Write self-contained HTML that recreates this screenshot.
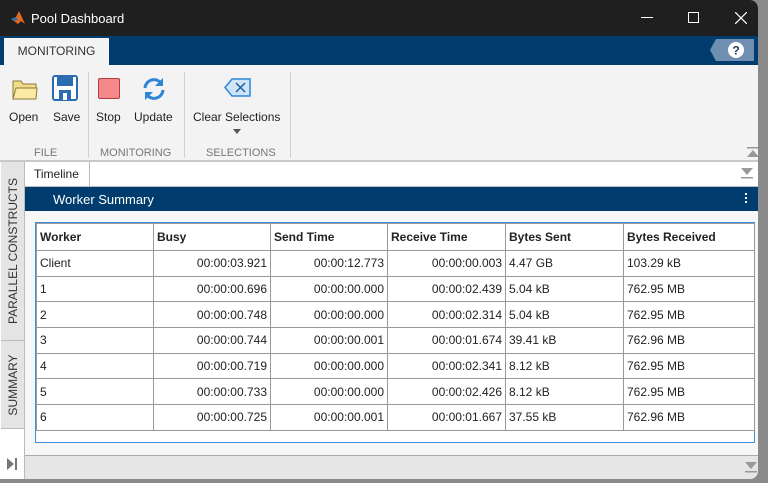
<!DOCTYPE html>
<html><head><style>
*{margin:0;padding:0;box-sizing:border-box}
body{width:768px;height:483px;background:#8a8a8a;font-family:"Liberation Sans",sans-serif;position:relative;overflow:hidden}
.win{position:absolute;left:0;top:0;width:758px;height:479px;background:#f3f3f3;border-radius:0 8px 8px 0;overflow:hidden}
.title{position:absolute;left:0;top:0;width:758px;height:36px;background:#1f1f1f;color:#fff;font-size:13px}
.tabs{position:absolute;left:0;top:36px;width:758px;height:29px;background:#003c6e}
.tab{position:absolute;left:4px;top:2px;width:105px;height:27px;background:#f3f3f3;color:#333;font-size:12px;text-align:center;line-height:27px}
.rb{position:absolute;font-size:12px;color:#222;text-align:center}
.grp{position:absolute;top:147px;font-size:11px;color:#777}
.sep{position:absolute;top:72px;width:1px;height:86px;background:#d0d0d0}
.side{position:absolute;left:0;top:162px;width:25px;height:317px;background:#fff;border-right:1px solid #bbb}
.vt{position:absolute;left:1px;width:23px;background:#e4e4e4;border-bottom:1px solid #bbb}
.vt span{position:absolute;left:50%;top:50%;transform:translate(-50%,-50%) rotate(-90deg);white-space:nowrap;font-size:12px;color:#333}
table{position:absolute;left:36px;top:223px;border-collapse:collapse;font-size:12px;color:#222}
td{border:1px solid #999;height:25.7px;padding:0 3px;white-space:nowrap}
th{border:1px solid #999;height:27px;padding:0 3px;text-align:left;font-weight:bold}
td.r{text-align:right}
</style></head><body>
<div class="win">
<div class="title">
<svg style="position:absolute;left:10px;top:10px" width="16" height="16" viewBox="0 0 16 16"><path d="M1 9l5-2 3-6 6 13-4-3-3 3z" fill="#e26b1f"/><path d="M1 9l5-2 2 3-4 1z" fill="#3a6ea8"/></svg>
<span style="position:absolute;left:31px;top:11px">Pool Dashboard</span>
<div style="position:absolute;left:641px;top:17px;width:12px;height:1px;background:#fff"></div>
<div style="position:absolute;left:688px;top:12px;width:11px;height:11px;border:1px solid #fff"></div>
<svg style="position:absolute;left:735px;top:12px" width="12" height="12"><path d="M0 0L12 12M12 0L0 12" stroke="#fff" stroke-width="1.2"/></svg>
</div>
<div class="tabs"><div class="tab">MONITORING</div>
<svg style="position:absolute;left:710px;top:3px" width="46" height="22"><path d="M6 0H44V22H6L0 11Z" fill="#6e8fb0"/><circle cx="26" cy="11" r="8" fill="#fff"/><text x="26" y="15.5" font-size="12" font-weight="bold" text-anchor="middle" fill="#1c3a5c" font-family="Liberation Sans">?</text></svg>
</div>
<!-- ribbon -->
<svg style="position:absolute;left:12px;top:78px" width="26" height="22"><path d="M1 3h8l2 3h13v15H1z" fill="#f2dc8a" stroke="#8a7a3a"/><path d="M1 21l3-11h21l-1 11z" fill="#fbe9a4" stroke="#8a7a3a"/></svg>
<svg style="position:absolute;left:52px;top:75px" width="26" height="26"><rect x="1" y="1" width="24" height="24" rx="2" fill="#fff" stroke="#2b6cb3" stroke-width="2"/><rect x="5" y="2" width="16" height="9" fill="#2b6cb3"/><rect x="7" y="15" width="12" height="10" fill="#2b6cb3"/><rect x="11" y="18" width="4" height="7" fill="#fff"/></svg>
<div class="rb" style="left:9px;top:110px">Open</div>
<div class="rb" style="left:53px;top:110px">Save</div>
<div class="sep" style="left:88px"></div>
<div style="position:absolute;left:98px;top:78px;width:22px;height:21px;background:#f4888a;border:1px solid #b03c3c;border-radius:2px"></div>
<svg style="position:absolute;left:141px;top:76px" width="26" height="26" viewBox="0 0 26 26"><path d="M4 12a9 9 0 0 1 16-5" fill="none" stroke="#2f86d6" stroke-width="3"/><path d="M22 2v8h-8z" fill="#2f86d6"/><path d="M22 14a9 9 0 0 1-16 5" fill="none" stroke="#2f86d6" stroke-width="3"/><path d="M4 24v-8h8z" fill="#2f86d6"/></svg>
<div class="rb" style="left:96px;top:110px">Stop</div>
<div class="rb" style="left:134px;top:110px">Update</div>
<div class="sep" style="left:184px"></div>
<svg style="position:absolute;left:224px;top:78px" width="27" height="19"><path d="M8 1h18v17H8L1 9.5z" fill="#cfe4f7" stroke="#2f86d6" stroke-width="1.5"/><path d="M12 5l9 9M21 5l-9 9" stroke="#1f5f9c" stroke-width="1.5"/></svg>
<div class="rb" style="left:193px;top:110px">Clear Selections</div>
<svg style="position:absolute;left:233px;top:129px" width="8" height="5"><path d="M0 0h8L4 5z" fill="#555"/></svg>
<div class="sep" style="left:290px"></div>
<div class="grp" style="left:34px">FILE</div>
<div class="grp" style="left:100px">MONITORING</div>
<div class="grp" style="left:206px">SELECTIONS</div>
<svg style="position:absolute;left:747px;top:147px" width="12" height="11"><path d="M0 0h12v1.5H0zM6 3l6 7H0z" fill="#999"/></svg>
<div style="position:absolute;left:0;top:160px;width:758px;height:2px;background:#c9c9c9"></div>
<!-- sidebar -->
<div class="side">
<div class="vt" style="top:0;height:179px"><span>PARALLEL CONSTRUCTS</span></div>
<div class="vt" style="top:179px;height:88px"><span>SUMMARY</span></div>
<svg style="position:absolute;left:7px;top:296px" width="11" height="12"><path d="M0 0l7 6-7 6z" fill="#777"/><rect x="8" y="0" width="2" height="12" fill="#777"/></svg>
</div>
<!-- timeline -->
<div style="position:absolute;left:25px;top:162px;width:733px;height:25px;background:#fff;border-bottom:1px solid #bbb"></div>
<div style="position:absolute;left:26px;top:162px;width:64px;height:25px;border-right:1px solid #bbb;font-size:12px;color:#222;padding:5px 0 0 8px">Timeline</div>
<svg style="position:absolute;left:741px;top:168px" width="12" height="11"><path d="M0 0h12L6 7zM0 9h12v1.5H0z" fill="#999"/></svg>
<div style="position:absolute;left:25px;top:187px;width:733px;height:24px;background:#003c6e;color:#fff;font-size:13px;padding:5px 0 0 28px">Worker Summary</div>
<div style="position:absolute;left:745px;top:193px;width:2px;height:2px;background:#fff;box-shadow:0 4px #fff,0 8px #fff"></div>
<div style="position:absolute;left:25px;top:211px;width:733px;height:244px;background:#f7f7f7"></div>
<div style="position:absolute;left:35px;top:222px;width:720px;height:221px;background:#fff;border:1px solid #3c8fd8"></div>
<table>
<colgroup><col style="width:117px"><col style="width:117px"><col style="width:117px"><col style="width:118px"><col style="width:118px"><col style="width:131px"></colgroup>
<tr><th>Worker</th><th>Busy</th><th>Send Time</th><th>Receive Time</th><th>Bytes Sent</th><th>Bytes Received</th></tr>
<tr><td>Client</td><td class="r">00:00:03.921</td><td class="r">00:00:12.773</td><td class="r">00:00:00.003</td><td>4.47 GB</td><td>103.29 kB</td></tr>
<tr><td>1</td><td class="r">00:00:00.696</td><td class="r">00:00:00.000</td><td class="r">00:00:02.439</td><td>5.04 kB</td><td>762.95 MB</td></tr>
<tr><td>2</td><td class="r">00:00:00.748</td><td class="r">00:00:00.000</td><td class="r">00:00:02.314</td><td>5.04 kB</td><td>762.95 MB</td></tr>
<tr><td>3</td><td class="r">00:00:00.744</td><td class="r">00:00:00.001</td><td class="r">00:00:01.674</td><td>39.41 kB</td><td>762.96 MB</td></tr>
<tr><td>4</td><td class="r">00:00:00.719</td><td class="r">00:00:00.000</td><td class="r">00:00:02.341</td><td>8.12 kB</td><td>762.95 MB</td></tr>
<tr><td>5</td><td class="r">00:00:00.733</td><td class="r">00:00:00.000</td><td class="r">00:00:02.426</td><td>8.12 kB</td><td>762.95 MB</td></tr>
<tr><td>6</td><td class="r">00:00:00.725</td><td class="r">00:00:00.001</td><td class="r">00:00:01.667</td><td>37.55 kB</td><td>762.96 MB</td></tr>
</table>
<div style="position:absolute;left:25px;top:455px;width:733px;height:24px;background:#e6e6e6;border-top:1px solid #aaa"></div>
<svg style="position:absolute;left:745px;top:462px" width="12" height="11"><path d="M0 0h12L6 7zM0 9h12v1.5H0z" fill="#999"/></svg>
</div>
</body></html>
